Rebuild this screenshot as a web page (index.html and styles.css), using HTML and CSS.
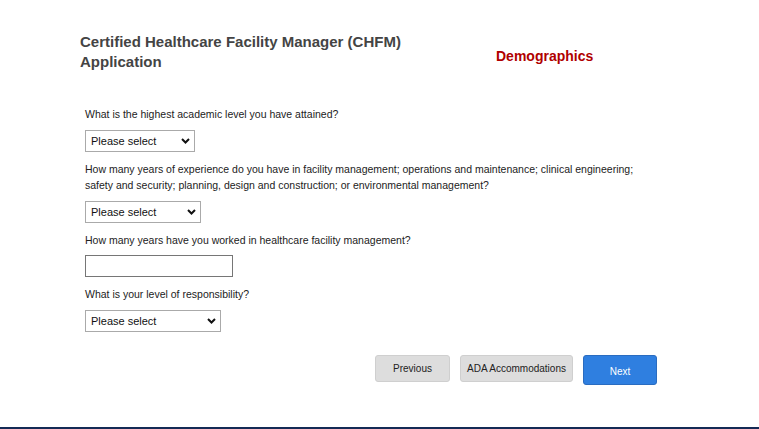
FILE: index.html
```html
<!DOCTYPE html>
<html lang="en">
<head>
<meta charset="utf-8">
<title>CHFM Application - Demographics</title>
<link rel="stylesheet" href="styles.css">
</head>
<body>
<div class="page">
  <main class="main">
    <header class="header">
      <h1 class="title">Certified Healthcare Facility Manager (CHFM) Application</h1>
      <h2 class="section">Demographics</h2>
    </header>
    <form class="form">
      <div class="field">
        <label class="label" for="q1">What is the highest academic level you have attained?</label>
        <div class="select-wrap w110">
          <select id="q1" class="select"><option>Please select</option></select>
          <svg class="chev" width="9" height="6" viewBox="0 0 9 6"><path d="M1 1 L4.5 4.5 L8 1" fill="none" stroke="#111" stroke-width="2"/></svg>
        </div>
      </div>
      <div class="field">
        <label class="label" for="q2">How many years of experience do you have in facility management; operations and maintenance; clinical engineering; safety and security; planning, design and construction; or environmental management?</label>
        <div class="select-wrap w116">
          <select id="q2" class="select"><option>Please select</option></select>
          <svg class="chev" width="9" height="6" viewBox="0 0 9 6"><path d="M1 1 L4.5 4.5 L8 1" fill="none" stroke="#111" stroke-width="2"/></svg>
        </div>
      </div>
      <div class="field">
        <label class="label" for="q3">How many years have you worked in healthcare facility management?</label>
        <input id="q3" class="input" type="text">
      </div>
      <div class="field">
        <label class="label" for="q4">What is your level of responsibility?</label>
        <div class="select-wrap w136">
          <select id="q4" class="select"><option>Please select</option></select>
          <svg class="chev" width="9" height="6" viewBox="0 0 9 6"><path d="M1 1 L4.5 4.5 L8 1" fill="none" stroke="#111" stroke-width="2"/></svg>
        </div>
      </div>
      <div class="actions">
        <button type="button" class="btn btn-gray">Previous</button>
        <button type="button" class="btn btn-gray btn-wide">ADA Accommodations</button>
        <button type="button" class="btn btn-blue">Next</button>
      </div>
    </form>
  </main>
  <div class="footer-line"></div>
</div>
</body>
</html>
```
FILE: styles.css
```css
* { box-sizing: border-box; }
html, body { margin: 0; padding: 0; background: #fff; }
body { font-family: "Liberation Sans", Arial, sans-serif; color: #222; }
.page { min-height: 429px; display: flex; flex-direction: column; }
.main { width: 657px; flex: 1; }
.header { display: flex; padding: 32px 0 0 80px; }
.title { margin: 0; width: 400px; font-size: 15px; line-height: 20px; font-weight: bold; color: #444; }
.section { margin: 14px 0 0 16px; font-size: 14px; line-height: 20px; font-weight: bold; color: #b00000; }
.form { padding: 34px 0 0 85px; display: flex; flex-direction: column; gap: 9px; }
.field { display: flex; flex-direction: column; align-items: flex-start; }
.label { font-size: 10.5px; line-height: 16px; color: #222; margin-bottom: 8px; }
.field:nth-child(3) .label { margin-bottom: 7px; }
.select-wrap { position: relative; height: 22px; }
.w110 { width: 110px; }
.w116 { width: 116px; }
.w136 { width: 136px; }
.select { appearance: none; -webkit-appearance: none; width: 100%; height: 22px; margin: 0; border: 1px solid #aaa; border-radius: 0; background: #fff; font-family: "Liberation Sans", Arial, sans-serif; font-size: 11px; color: #111; padding: 0 0 0 5px; }
.chev { position: absolute; right: 5px; top: 8px; }
.input { width: 148px; height: 22px; margin: 0; border: 1px solid #767676; border-radius: 0; background: #fff; }
.actions { display: flex; justify-content: flex-end; align-items: flex-start; gap: 10px; margin-top: 14px; }
.btn { font-family: "Liberation Sans", Arial, sans-serif; font-size: 10px; border-radius: 3px; cursor: pointer; padding: 0; }
.btn-gray { width: 75px; height: 27px; background: #dddddd; border: 1px solid #cfcfcf; color: #222; }
.btn-wide { width: 113px; }
.btn-blue { width: 74px; height: 30px; background: #2f7fe0; border: 1px solid #2a6cc0; color: #fff; padding-top: 2px; }
.footer-line { height: 2px; background: #142a55; }
```
